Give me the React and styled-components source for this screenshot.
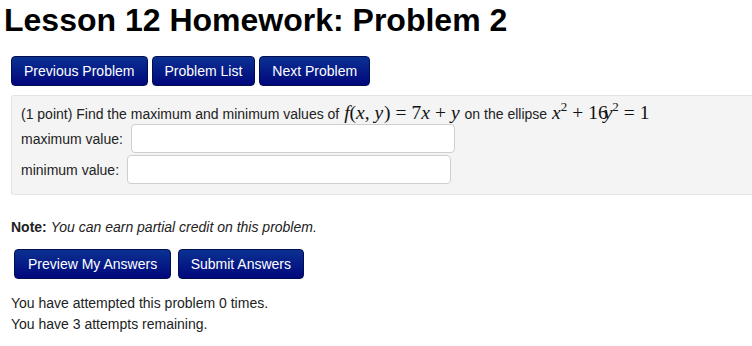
import React from "react";
import styled, { createGlobalStyle } from "styled-components";

const GlobalStyle = createGlobalStyle`
  body {
    margin: 0;
    background: #fff;
    font-family: "Liberation Sans", Arial, sans-serif;
    color: #222;
  }
`;

const Page = styled.div`
  padding: 0 0 0 11px;
`;

const Title = styled.h1`
  margin: 0 0 0 -7px;
  padding-top: 2px;
  font-size: 32px;
  font-weight: 700;
  color: #000;
  line-height: 36px;
`;

const ButtonRow = styled.div`
  display: flex;
  gap: ${(p) => p.gap || 4}px;
  margin: ${(p) => p.margin};
`;

const Button = styled.button`
  height: 30px;
  padding: 0 ${(p) => p.px || 12}px;
  border: 1px solid #00104f;
  border-radius: 4px;
  background: linear-gradient(to bottom, #0b3192, #00077c);
  color: #fff;
  font-family: "Liberation Sans", Arial, sans-serif;
  font-size: 14px;
  cursor: pointer;
`;

const ProblemBox = styled.div`
  margin-top: 9px;
  background: #f4f4f4;
  border: 1px solid #e4e4e4;
  border-right: none;
  border-radius: 3px 0 0 3px;
  padding: 7px 0 10px 9px;
  font-size: 14px;
  line-height: 20px;
`;

const Math = styled.span`
  font-family: "Liberation Serif", "DejaVu Serif", serif;
  font-size: 19.5px;
  color: #111;
  margin: 0 1px;
`;

const V = styled.i`
  font-style: italic;
  margin-right: ${(p) => p.mr || 0}px;
`;

const Op = styled.span`
  margin: 0 5px;
`;

const Sup = styled.sup`
  font-size: 13px;
  line-height: 0;
  vertical-align: 8px;
`;

const AnswerRow = styled.div`
  display: flex;
  align-items: center;
  gap: 8px;
  margin-top: ${(p) => p.mt || 0}px;
`;

const Input = styled.input`
  width: 324px;
  height: 29px;
  box-sizing: border-box;
  border: 1px solid #cfcfcf;
  border-radius: 4px;
  background: #fff;
`;

const Note = styled.p`
  margin: 23px 0 0;
  font-size: 14px;
  line-height: 18px;
  b {
    font-weight: 700;
  }
  i {
    font-style: italic;
  }
`;

const Status = styled.p`
  margin: 0;
  font-size: 14px;
  line-height: 21px;
`;

export default function App() {
  return (
    <>
      <GlobalStyle />
      <Page>
        <Title>Lesson 12 Homework: Problem 2</Title>
        <ButtonRow margin="18px 0 0 0">
          <Button>Previous Problem</Button>
          <Button>Problem List</Button>
          <Button>Next Problem</Button>
        </ButtonRow>
        <ProblemBox>
          <div>
            (1 point) Find the maximum and minimum values of{" "}
            <Math>
              <V>f</V>(<V>x</V>, <V mr={1}>y</V>)<Op>=</Op>7<V>x</V>
              <Op>+</Op>
              <V>y</V>
            </Math>{" "}
            on the ellipse{" "}
            <Math>
              <V>x</V>
              <Sup>2</Sup>
              <Op>+</Op>16<V style={{ marginLeft: -4 }}>y</V>
              <Sup>2</Sup>
              <Op>=</Op>1
            </Math>
          </div>
          <AnswerRow>
            maximum value: <Input />
          </AnswerRow>
          <AnswerRow mt={2}>
            minimum value: <Input />
          </AnswerRow>
        </ProblemBox>
        <Note>
          <b>Note:</b> <i>You can earn partial credit on this problem.</i>
        </Note>
        <ButtonRow gap={7} margin="13px 0 14px 3px">
          <Button px={13}>Preview My Answers</Button>
          <Button px={11.5}>Submit Answers</Button>
        </ButtonRow>
        <Status>You have attempted this problem 0 times.</Status>
        <Status>You have 3 attempts remaining.</Status>
      </Page>
    </>
  );
}
